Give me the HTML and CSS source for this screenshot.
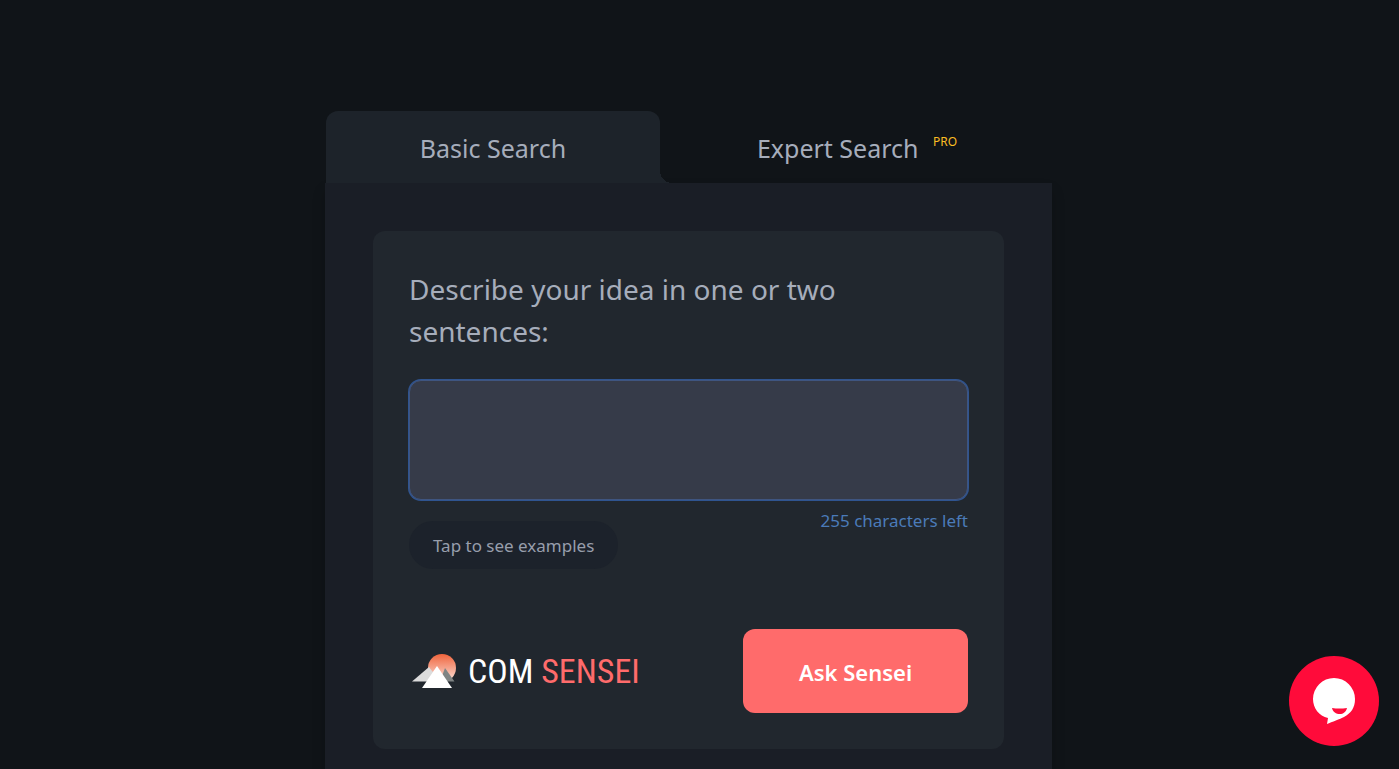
FILE: index.html
```html
<!DOCTYPE html>
<html lang="en">
<head>
    <meta charset="UTF-8">
    <meta name="viewport" content="width=device-width, initial-scale=1">
    <title>Com Sensei</title>
    <link rel="stylesheet" href="styles.css">
</head>
<body>
    <main class="container">
        <div class="tabs">
            <button class="tab active" type="button">Basic Search</button>
            <button class="tab" type="button">Expert Search <span class="pro">PRO</span></button>
        </div>

        <div class="panel">
            <form class="card">
                <label class="question" for="idea">Describe your idea in one or two sentences:</label>
                <textarea class="idea" id="idea" maxlength="255"></textarea>

                <div class="hints">
                    <button class="examples" type="button">Tap to see examples</button>
                    <span class="counter">255 characters left</span>
                </div>

                <div class="actions">
                    <a class="logo" href="#">
                        <svg class="logo-icon" width="46" height="34" viewBox="0 0 46 34" aria-hidden="true">
                            <defs>
                                <linearGradient id="sun" x1="0" y1="0" x2="0" y2="1">
                                    <stop offset="0" stop-color="#f0643c"/>
                                    <stop offset="1" stop-color="#fbe3dc"/>
                                </linearGradient>
                            </defs>
                            <circle cx="30" cy="14" r="14" fill="url(#sun)"/>
                            <path d="M0 27.5 L17 13 L28 27.5 Z" fill="#dcdcdc"/>
                            <path d="M33 14 L42.5 27.5 H28 Z" fill="#7f8484"/>
                            <path d="M25 12 L40 34 H10 Z" fill="#fff"/>
                        </svg>
                        <span class="logo-text">COM <span class="logo-red">SENSEI</span></span>
                    </a>
                    <button class="ask" type="button">Ask Sensei</button>
                </div>
            </form>
        </div>
    </main>

    <button class="chat" type="button" aria-label="Chat">
        <svg width="90" height="90" viewBox="0 0 90 90" aria-hidden="true">
            <path d="M45 22 a21 21 0 0 1 21 21 C66 52 62 57 55 61 C51 63 43 66 38 68 L39 62 C30 60 24 52 24 43 a21 21 0 0 1 21 -21 Z" fill="#fff"/>
            <path d="M43 52 Q50 53 58 52 C57 56 54 58 51 58 C47 58 44 56 43 52 Z" fill="#ff0b3a"/>
        </svg>
    </button>
</body>
</html>
```

FILE: styles.css
```css
* {
    box-sizing: border-box;
}

body {
    margin: 0;
    padding: 111px 22px 0 0;
    height: 100vh;
    overflow: hidden;
    background-color: #101418;
    color: #a6adbb;
    font-family: 'Segoe UI', 'Noto Sans', sans-serif;
}

button {
    border: none;
    cursor: pointer;
    color: inherit;
    font-family: inherit;
}

.container {
    max-width: 727px;
    margin: 0 auto;
}

.tabs {
    display: flex;
    padding-left: 1px;
}

.tab {
    flex: 1 1 0;
    height: 72px;
    padding: 2px 0 0 2px;
    background: none;
    font-size: 25px;
}

.tab.active {
    position: relative;
    flex: 0 0 46%;
    padding: 2px 0 0;
    background-color: #1d232a;
    border-radius: 12px 12px 0 0;
}

/* rounded foot on the right side of the open tab */
.tab.active::after {
    content: "";
    position: absolute;
    left: 100%;
    bottom: 0;
    width: 12px;
    height: 12px;
    background: radial-gradient(circle at 12px 0, transparent 12px, #1d232a 12px);
}

.pro {
    margin-left: 8px;
    color: #fbbd23;
    font-size: 12px;
    vertical-align: 12px;
    line-height: 1;
}

.panel {
    padding: 48px;
    background-color: #1a1e26;
    box-shadow: 0 8px 12px rgba(0, 0, 0, 0.2);
}

.card {
    padding: 36px;
    background-color: #21272e;
    border-radius: 12px;
}

.question {
    display: block;
    padding-top: 1px;
    margin-bottom: 28px;
    font-size: 28px;
    line-height: 42px;
}

.idea {
    display: block;
    width: 100%;
    height: 120px;
    padding: 12px 24px;
    resize: none;
    border: 1px solid #3f5580;
    border-radius: 12px;
    outline: none;
    box-shadow: 0 0 0 1px #2f5490;
    background-color: #363b49;
    color: inherit;
    font: inherit;
    font-size: 18px;
}

.hints {
    display: flex;
    justify-content: space-between;
    align-items: flex-start;
    padding-top: 9px;
}

.examples {
    height: 48px;
    margin-top: 12px;
    padding: 0 24px;
    border-radius: 24px;
    background-color: #1c222b;
    color: #979eab;
    font-size: 17px;
}

.counter {
    color: #4b7bb9;
    font-size: 17px;
    line-height: 24px;
}

.actions {
    display: flex;
    justify-content: space-between;
    align-items: center;
    margin-top: 60px;
}

.logo {
    display: flex;
    align-items: center;
    gap: 10px;
    padding-left: 3px;
    text-decoration: none;
}

.logo-text {
    color: #fff;
    font-family: 'Roboto Condensed', Roboto, sans-serif;
    font-size: 34px;
    line-height: 36px;
    white-space: nowrap;
}

.logo-red {
    color: #ff6b6b;
}

.ask {
    width: 225px;
    height: 84px;
    padding: 2px 0 0;
    border-radius: 12px;
    background-color: #ff6b6b;
    color: #fff;
    font-size: 22px;
    font-weight: 600;
}

.chat {
    position: fixed;
    right: 20px;
    bottom: 23px;
    width: 90px;
    height: 90px;
    padding: 0;
    border-radius: 50%;
    background-color: #ff0b3a;
}

.chat svg {
    display: block;
}

@media (max-width: 600px) {
    .panel {
        padding: 16px;
    }

    .actions {
        flex-direction: column;
        gap: 20px;
    }
}
```
